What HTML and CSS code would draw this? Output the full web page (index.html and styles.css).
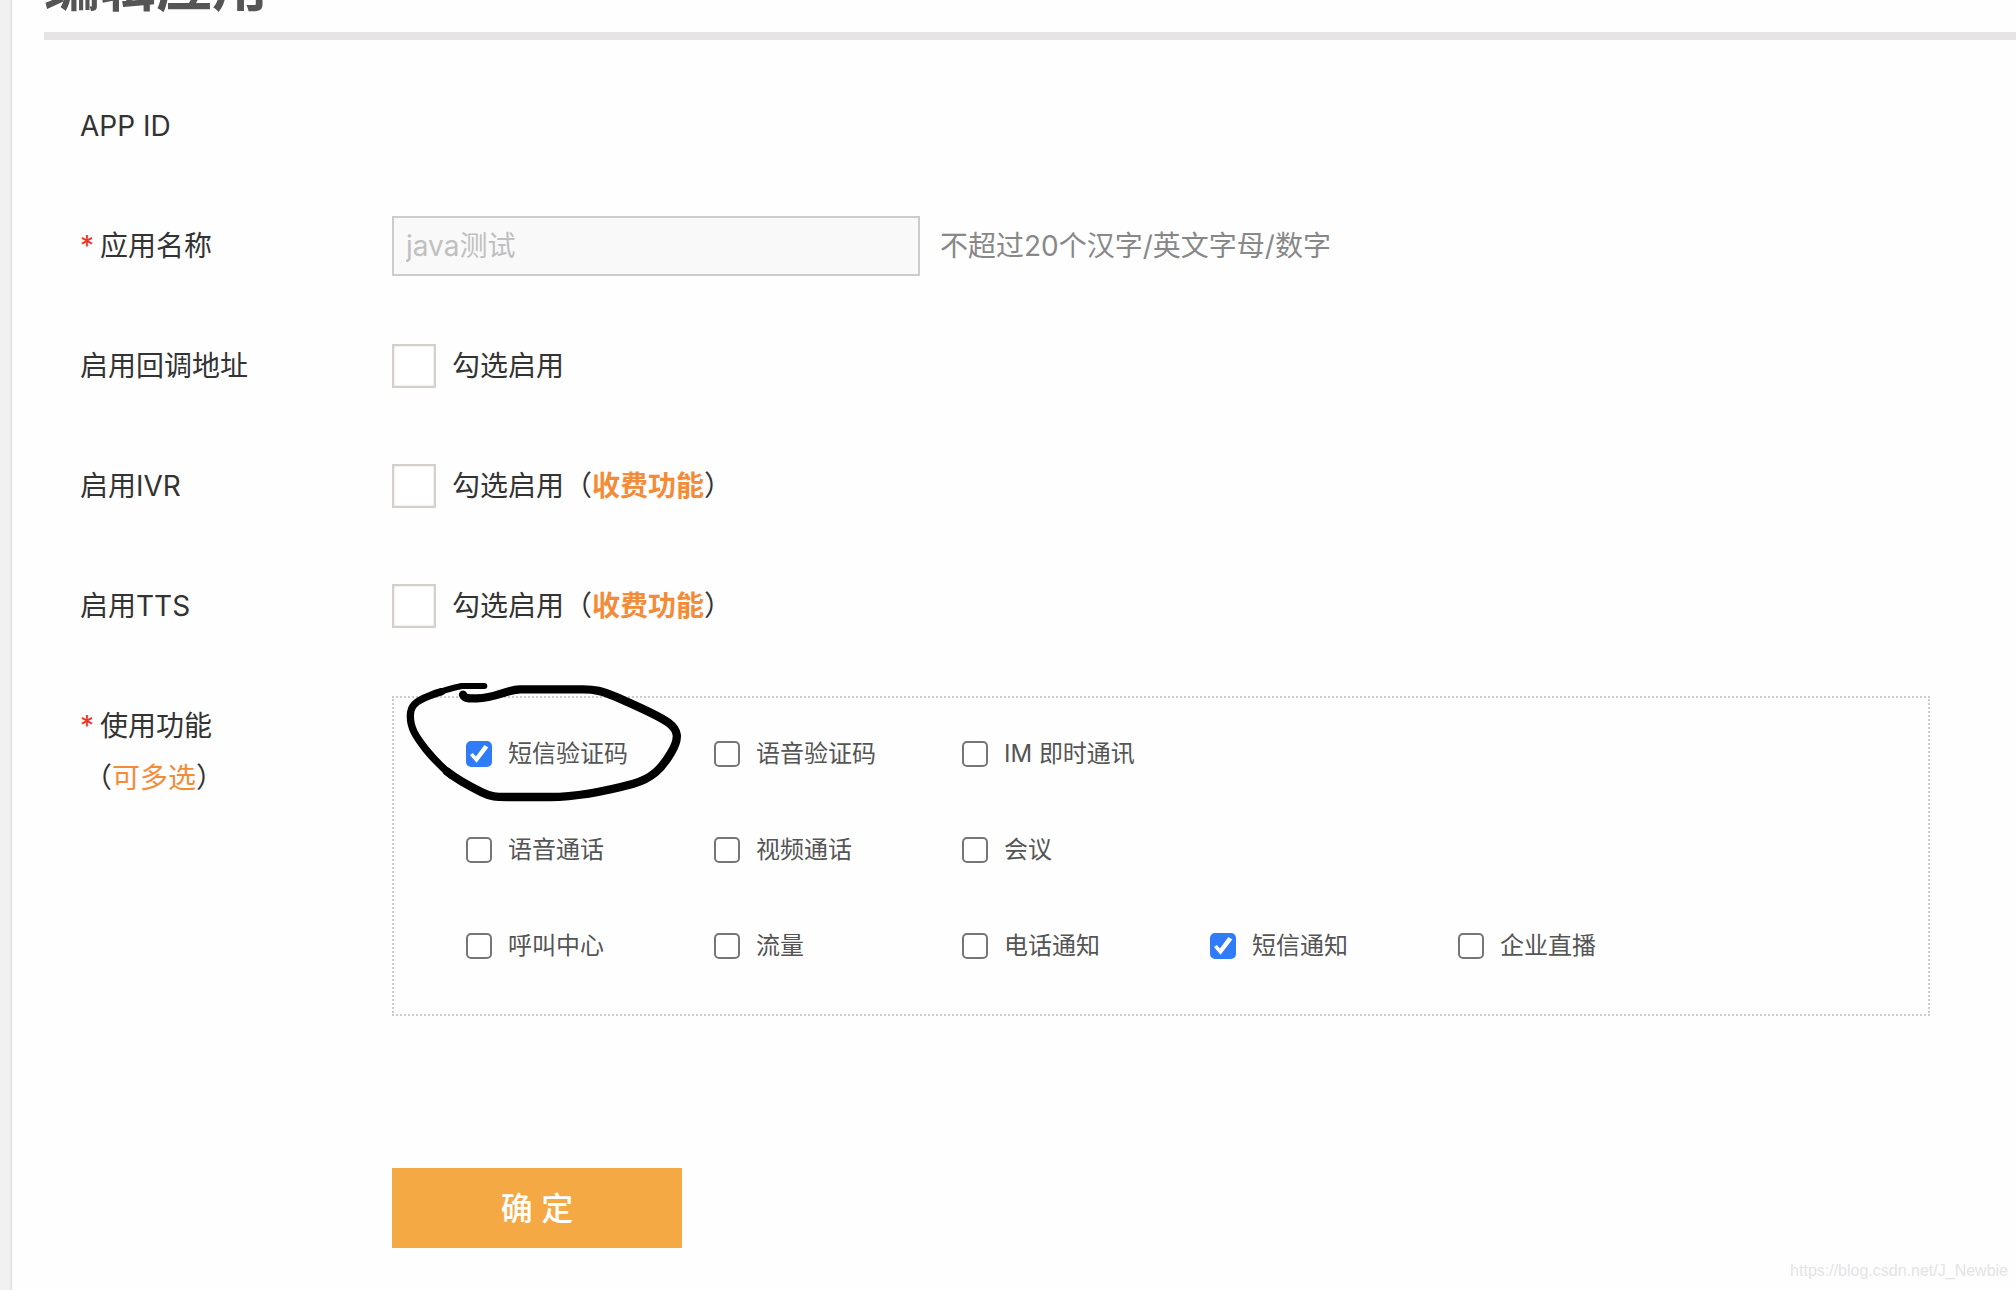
FILE: index.html
```
<!doctype html>
<html lang="zh-CN">
	<head>
		<meta charset="utf-8">
		<title>编辑应用</title>
		<link rel="stylesheet" href="styles.css">
	</head>
	<body>
		<main class="page">
			<header class="page-head">
				<h1>编辑应用</h1>
			</header>
			<form class="app-form">
				<div class="row">
					<div class="label">APP ID</div>
				</div>
				<div class="row">
					<label class="label" for="app-name"><span class="required">*</span>应用名称</label>
					<input type="text" id="app-name" class="text" value="java测试" disabled>
					<span class="hint">不超过20个汉字/英文字母/数字</span>
				</div>
				<div class="row">
					<div class="label">启用回调地址</div>
					<label class="enable"><input type="checkbox" class="big-check"><span>勾选启用</span></label>
				</div>
				<div class="row">
					<div class="label">启用IVR</div>
					<label class="enable"><input type="checkbox" class="big-check"><span>勾选启用（<b>收费功能</b>）</span></label>
				</div>
				<div class="row">
					<div class="label">启用TTS</div>
					<label class="enable"><input type="checkbox" class="big-check"><span>勾选启用（<b>收费功能</b>）</span></label>
				</div>
				<div class="row row-features">
					<div class="label" id="features-label">
						<span class="required">*</span>使用功能
						<div class="multi">（<em>可多选</em>）</div>
					</div>
					<div class="features" role="group" aria-labelledby="features-label">
						<div class="feature-row">
							<label><input type="checkbox" checked>短信验证码</label>
							<label><input type="checkbox">语音验证码</label>
							<label><input type="checkbox">IM 即时通讯</label>
						</div>
						<div class="feature-row">
							<label><input type="checkbox">语音通话</label>
							<label><input type="checkbox">视频通话</label>
							<label><input type="checkbox">会议</label>
						</div>
						<div class="feature-row">
							<label><input type="checkbox">呼叫中心</label>
							<label><input type="checkbox">流量</label>
							<label><input type="checkbox">电话通知</label>
							<label><input type="checkbox" checked>短信通知</label>
							<label><input type="checkbox">企业直播</label>
						</div>
						<!-- hand drawn circle around the first feature -->
						<svg class="marker" viewBox="60 30 870 390" aria-hidden="true">
							<path class="thin" d="M313 48 H245 C215 54 185 63 150 77"/>
							<path class="mid" d="M185 65 C170 69 162 72 150 77 C105 94 91 108 91 138 C91 175 108 200 135 235 C165 272 185 292 215 316"/>
							<path d="M200 304 C235 332 275 352 305 367 C335 382 350 381 390 381 H510 C590 380 690 360 760 341 C815 326 845 296 872 250 C900 204 895 180 865 158 C830 133 760 104 706 80 C665 63 645 58 610 58 H420 C375 60 350 84 290 85 C262 86 252 84 249 74"/>
						</svg>
					</div>
				</div>
				<button type="submit" class="submit">确 定</button>
			</form>
		</main>
		<div class="watermark">https://blog.csdn.net/J_Newbie</div>
	</body>
</html>
```
FILE: styles.css
```
* {
	box-sizing: border-box;
}
html, body {
	margin: 0;
	min-height: 100%;
	color: #333;
	font-family: Inter, "Noto Sans CJK SC", sans-serif;
	font-size: 28px;
	background-color: #f1f1f1;
}
body {
	display: flex;
	min-height: 100vh;
	padding-left: 12px;
	position: relative;
}
input, button {
	font: inherit;
	margin: 0;
}
.page {
	flex: 1;
	min-width: 0;
	background-color: #fefefe;
	box-shadow: 0 0 2px 1px #d8d8d8;
}

/* the title is scrolled halfway out of view */
.page-head {
	display: flex;
	align-items: flex-end;
	height: 40px;
	margin-left: 32px;
	padding-bottom: 18px;
	border-bottom: 8px solid #e6e4e5;
	overflow: hidden;
}
h1 {
	margin: 0;
	color: #555;
	font-size: 56px;
	font-weight: 700;
	line-height: 56px;
}

.app-form {
	padding: 56px 86px 40px 68px;
}
.row {
	display: flex;
	align-items: center;
	height: 60px;
	margin-bottom: 60px;
	line-height: 60px;
}
.label {
	flex: none;
	width: 312px;
}
.required {
	display: inline-block;
	width: 20px;
	color: #ee3224;
}
.text {
	width: 528px;
	height: 60px;
	padding: 0 12px;
	border: 2px solid #ccc;
	color: #c0c0c0;
	background-color: #f9f9f9;
}
.hint {
	margin-left: 20px;
	color: #888;
}
.enable {
	display: flex;
	align-items: center;
	gap: 16px;
}
.enable b, .multi em {
	color: #f28c38;
	font-style: normal;
}
.big-check {
	appearance: none;
	width: 44px;
	height: 44px;
	border: 2px solid #d3d0ca;
	background-color: #fff;
	box-shadow: inset 0 0 2px #d3d0ca;
}

.row-features {
	align-items: flex-start;
	height: auto;
	margin-bottom: 152px;
}
.multi {
	padding-left: 4px;
	line-height: 44px;
}
.features {
	position: relative;
	flex: 1;
	padding: 8px 0 20px 72px;
	border: 2px dotted #ccc;
	color: #555;
	font-size: 24px;
}
.feature-row {
	display: grid;
	grid-template-columns: repeat(5, 248px);
	height: 96px;
	line-height: 94px;
}
.feature-row label {
	display: flex;
	align-items: center;
	gap: 16px;
}
.feature-row input {
	appearance: none;
	width: 26px;
	height: 26px;
	border: 2px solid #767676;
	border-radius: 5px;
	background-color: #fff;
}
.feature-row input:checked {
	border-color: #2f7bf8;
	background-color: #2f7bf8;
}
.feature-row input:checked::before {
	content: "";
	display: block;
	width: 22px;
	height: 22px;
	background-color: #fff;
	clip-path: polygon(9% 55%, 22% 45%, 36% 61%, 75% 9%, 92% 20%, 39% 90%);
}
.marker {
	position: absolute;
	left: 6px;
	top: -18px;
	width: 290px;
	height: 130px;
	fill: none;
	stroke: #000;
	stroke-width: 25;
	stroke-linecap: round;
	stroke-linejoin: round;
	pointer-events: none;
}
.marker .thin {
	stroke-width: 18;
}
.marker .mid {
	stroke-width: 22;
}

.submit {
	display: block;
	width: 290px;
	height: 80px;
	margin-left: 312px;
	padding: 0 0 4px;
	border: 0;
	color: #fff;
	font-size: 32px;
	font-weight: 500;
	background-color: #f4a945;
}
.watermark {
	position: absolute;
	right: 8px;
	bottom: 10px;
	color: #e4e4e4;
	font-family: "Liberation Sans", sans-serif;
	font-size: 16px;
}
```
